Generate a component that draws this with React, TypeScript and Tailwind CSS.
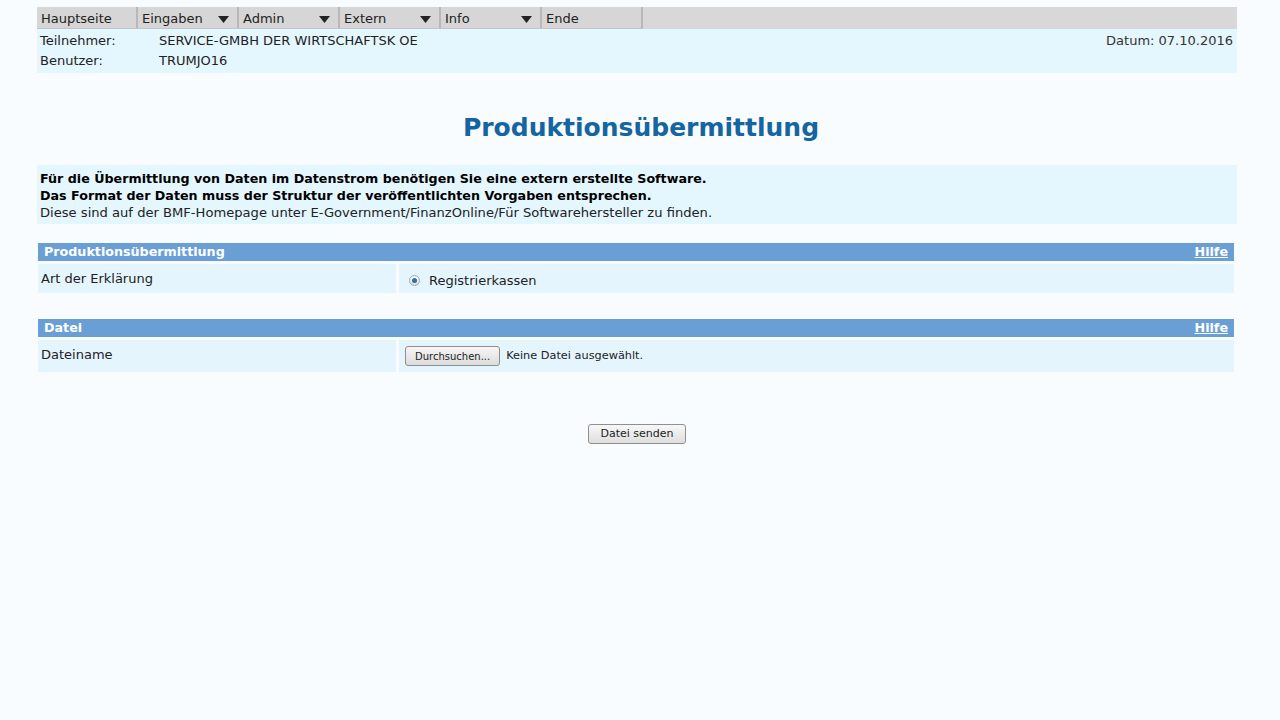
import React from "react";

const menu = [
  { label: "Hauptseite", arrow: false },
  { label: "Eingaben", arrow: true },
  { label: "Admin", arrow: true },
  { label: "Extern", arrow: true },
  { label: "Info", arrow: true },
  { label: "Ende", arrow: false },
];

function Arrow() {
  return (
    <svg width="11" height="7" viewBox="0 0 11 7" aria-hidden="true">
      <path d="M0 0h11L5.5 7z" fill="#222" />
    </svg>
  );
}

function SectionHeader({ title }: { title: string }) {
  return (
    <div className="flex h-[18px] items-center justify-between bg-[#6a9fd6] px-[6px] text-[12.7px] font-bold leading-none text-white">
      <span>{title}</span>
      <a href="#" className="underline">
        Hilfe
      </a>
    </div>
  );
}

function FormRow({
  label,
  valueClass,
  children,
}: {
  label: string;
  valueClass: string;
  children: React.ReactNode;
}) {
  return (
    <div className="mt-[3px] flex gap-[3px]">
      <div className="w-[358px] shrink-0 bg-[#e4f5fe] px-[3px] py-[7px] text-[13px] leading-[15px] text-[#222]">
        {label}
      </div>
      <div className={`flex flex-1 items-center bg-[#e4f5fe] px-[6px] text-[13px] text-[#222] ${valueClass}`}>
        {children}
      </div>
    </div>
  );
}

export default function App() {
  return (
    <div
      className="min-h-[720px] bg-[#f8fcff] pt-[7px]"
      style={{ fontFamily: '"DejaVu Sans", Verdana, sans-serif' }}
    >
      <div className="ml-[37px] w-[1200px]">
        <nav className="flex h-[22px] bg-[#d8d8d8]">
          {menu.map((m) => (
            <div
              key={m.label}
              className="flex w-[101px] items-center justify-between border-r-2 border-b border-r-[#b8b8b8] border-b-[#c4c4c4] bg-[#d6d6d6] pt-[3px] pl-[4px] pr-[8px] text-[13px] text-[#222]"
            >
              <span>{m.label}</span>
              {m.arrow && <Arrow />}
            </div>
          ))}
        </nav>

        <div className="flex justify-between bg-[#e4f6fe] px-[3px] py-[2px] text-[13px] leading-[20px] text-[#222]">
          <div className="grid grid-cols-[119px_auto]">
            <span>Teilnehmer:</span>
            <span>SERVICE-GMBH DER WIRTSCHAFTSK OE</span>
            <span>Benutzer:</span>
            <span>TRUMJO16</span>
          </div>
          <div className="pr-[1px] text-[#333]">Datum: 07.10.2016</div>
        </div>

        <h1 className="mt-[40px] pl-[8px] text-center text-[25px] font-bold leading-[30px] text-[#1565a0]">
          Produktionsübermittlung
        </h1>

        <div className="mt-[22px] bg-[#e4f6fe] px-[3px] pt-[5px] pb-[3px] leading-[17px] text-black">
          <p className="text-[12.7px] font-bold">
            Für die Übermittlung von Daten im Datenstrom benötigen Sie eine extern erstellte Software.
          </p>
          <p className="text-[12.7px] font-bold">
            Das Format der Daten muss der Struktur der veröffentlichten Vorgaben entsprechen.
          </p>
          <p className="text-[13.1px] text-[#222]">
            Diese sind auf der BMF-Homepage unter E-Government/FinanzOnline/Für Softwarehersteller zu finden.
          </p>
        </div>

        <div className="mt-[19px] ml-[1px] mr-[3px]">
          <SectionHeader title="Produktionsübermittlung" />
          <FormRow label="Art der Erklärung" valueClass="pt-[8px] pb-[4px] leading-[17px]">
            <span className="ml-[4px] flex h-[11px] w-[11px] items-center justify-center rounded-full border border-[#9aa9b6] bg-gradient-to-b from-white to-[#d8e2ea]">
              <span className="h-[5px] w-[5px] rounded-full bg-[#3a6d93]" />
            </span>
            <span className="ml-[9px]">Registrierkassen</span>
          </FormRow>

          <div className="mt-[26px]">
            <SectionHeader title="Datei" />
          </div>
          <FormRow label="Dateiname" valueClass="py-[6px]">
            <button className="h-[20px] rounded-[3px] border border-[#8f8f8f] bg-gradient-to-b from-[#f6f6f6] to-[#dcdcdc] px-[9px] text-[10px] text-[#222]">
              Durchsuchen...
            </button>
            <span className="ml-[6px] text-[11.3px]">Keine Datei ausgewählt.</span>
          </FormRow>
        </div>

        <div className="mt-[52px] flex justify-center">
          <button className="h-[20px] rounded-[3px] border border-[#8f8f8f] bg-gradient-to-b from-[#f8f8f8] to-[#dedede] px-[11px] text-[11px] text-[#222]">
            Datei senden
          </button>
        </div>
      </div>
    </div>
  );
}
